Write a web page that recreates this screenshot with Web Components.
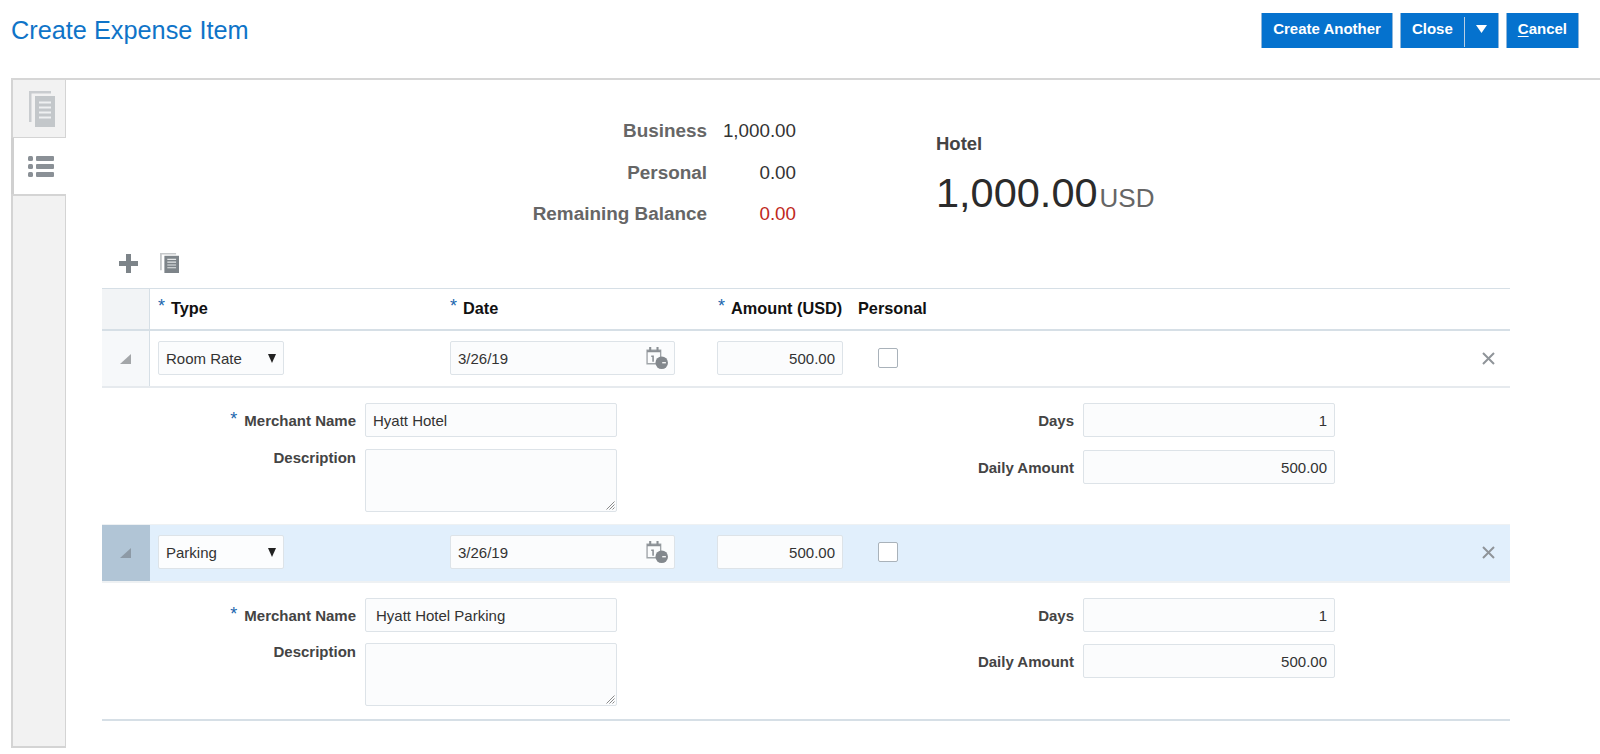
<!DOCTYPE html>
<html>
<head>
<meta charset="utf-8">
<title>Create Expense Item</title>
<style>
  html, body { margin: 0; height: 100%; background: #fff; overflow: hidden; }
  body { font-family: "Liberation Sans", Arial, sans-serif; color: #333; }
</style>
</head>
<body>
<expense-page></expense-page>

<script>
const ICONS = {
  pages: (back, front, line) => `<path fill="${back}" d="M0 0h22v2.500H2.500V31H0z"/><path fill="${front}" d="M6 5h20v31H6z"/><path fill="${line}" d="M10 10.500h12v2H10zM10 15.500h12v2H10zM10 20.500h12v2H10zM10 25.500h12v2H10z"/>`,
  list: '<g fill="#8a9096"><rect x="0" y="0" width="5" height="5" rx="1.500"/><rect x="0" y="8" width="5" height="5" rx="1.500"/><rect x="0" y="16" width="5" height="5" rx="1.500"/><rect x="8" y="0" width="18" height="5" rx="1"/><rect x="8" y="8" width="18" height="5" rx="1"/><rect x="8" y="16" width="18" height="5" rx="1"/></g>',
  plus: '<path fill="#7d8489" d="M7 0h5v7h7v5h-7v7H7v-7H0V7h7z"/>',
  calendar: '<path fill="none" stroke="#a0a5a9" stroke-width="1.300" d="M1 4h13v13H1z"/><path fill="#8b9095" d="M3 1h2v4H3zM10 1h2v4h-2zM1 4h13v2H1z"/><path fill="#8b9095" d="M5 9h2.500v6H6v-4.500H5z"/><circle cx="15" cy="16" r="6" fill="#83888d"/><path stroke="#fff" stroke-width="1.200" fill="none" d="M15.500 16h3.500"/>',
  close: '<path stroke="#8f9499" stroke-width="2" fill="none" d="M1 1l11 11M12 1L1 12"/>'
};

class ExpenseHeader extends HTMLElement {
  constructor() {
    super();
    this.attachShadow({ mode: "open" });
    this.shadowRoot.innerHTML = `
      <style>
        :host { display: flex; justify-content: space-between; align-items: flex-start; height: 78px; box-sizing: border-box; padding: 13px 21px 0 11px; }
        h1 { margin: 1px 0 0; font: 400 25.300px/33px "Liberation Sans", Arial, sans-serif; color: #0f74c8; }
        .actions { display: flex; gap: 7px; }
        .btn { display: flex; align-items: center; height: 35px; box-sizing: border-box; padding: 0 11px 4px; background: #0572ce; color: #fff; font: 700 15px "Liberation Sans", Arial, sans-serif; border-left: 1px solid #8fb6da; border-right: 1px solid #8fb6da; white-space: nowrap; }
        .split { padding-right: 0; }
        .split .sep { width: 1px; height: 30px; margin: 4px 0 0 11px; background: #b9cfe3; align-self: flex-start; }
        .split svg { margin: 0 11px 0 11px; }
        u { text-underline-offset: 2px; }
      </style>
      <h1>Create Expense Item</h1>
      <div class="actions">
        <div class="btn">Create Another</div>
        <div class="btn split">Close<span class="sep"></span><svg width="11" height="8" viewBox="0 0 11 8"><path fill="#fff" d="M0 0h11L5.500 8z"/></svg></div>
        <div class="btn"><span><u>C</u>ancel</span></div>
      </div>`;
  }
}

class SideTabs extends HTMLElement {
  constructor() {
    super();
    this.attachShadow({ mode: "open" });
    this.shadowRoot.innerHTML = `
      <style>
        :host { display: flex; flex-direction: column; flex: none; width: 55px; }
        .tab { box-sizing: border-box; display: flex; justify-content: center; align-items: center; }
        .off { height: 58px; background: #f2f2f2; border: 1px solid #d4d4d4; border-top: 0; border-left-width: 2px; padding-left: 5px; }
        .on { height: 56px; background: #fff; border-left: 3px solid #d0d0d0; padding-left: 1px; }
        .rest { flex: 1; background: #f2f2f2; border: 1px solid #d4d4d4; border-left-width: 2px; border-bottom-width: 2px; border-top-width: 2px; }
      </style>
      <div class="tab off"><svg width="26" height="36" viewBox="0 0 26 36">${ICONS.pages("#c9cccf", "#c3c7ca", "#eef0f1")}</svg></div>
      <div class="tab on"><svg width="26" height="21" viewBox="0 0 26 21">${ICONS.list}</svg></div>
      <div class="tab rest"></div>`;
  }
}

class ExpenseSummary extends HTMLElement {
  constructor() {
    super();
    this.attachShadow({ mode: "open" });
    this.shadowRoot.innerHTML = `
      <style>
        :host { display: flex; height: 164px; box-sizing: border-box; padding-top: 29px; font-family: "Liberation Sans", Arial, sans-serif; }
        .totals { display: grid; grid-template-columns: 605px 89px; grid-template-rows: 43px 41px 41px; align-items: center; text-align: right; font-size: 18.800px; height: 125px; }
        .l { font-weight: 700; font-size: 18.900px; color: #666; }
        .v { color: #333; }
        .red { color: #c0281c; }
        .hotel { margin-left: 140px; padding-top: 24px; }
        .name { font-weight: 700; font-size: 18.500px; color: #444; line-height: 22px; }
        .big { margin-top: 14px; font-size: 41.500px; line-height: 48px; color: #2b2b2b; white-space: nowrap; }
        .big span { font-size: 26px; color: #666; margin-left: 2px; }
      </style>
      <div class="totals">
        <div class="l">Business</div><div class="v">1,000.00</div>
        <div class="l">Personal</div><div class="v">0.00</div>
        <div class="l">Remaining Balance</div><div class="v red">0.00</div>
      </div>
      <div class="hotel">
        <div class="name">Hotel</div>
        <div class="big">1,000.00<span>USD</span></div>
      </div>`;
  }
}

class ExpenseToolbar extends HTMLElement {
  constructor() {
    super();
    this.attachShadow({ mode: "open" });
    this.shadowRoot.innerHTML = `
      <style>
        :host { display: flex; align-items: center; height: 44px; box-sizing: border-box; padding: 0 0 6px 17px; gap: 22px; }
        svg { display: block; }
      </style>
      <svg width="19" height="19" viewBox="0 0 19 19">${ICONS.plus}</svg>
      <svg width="19" height="20" viewBox="0 0 26 36" preserveAspectRatio="none">${ICONS.pages("#c5c8ca", "#7d8489", "#e4e6e8")}</svg>`;
  }
}

// shared look of the text boxes
const FIELD_CSS = `
  .field { box-sizing: border-box; height: 34px; display: flex; align-items: center; justify-content: space-between; background: #fbfcfd; border: 1px solid #dde3e8; border-radius: 2px; padding: 0 7px; font: 15px "Liberation Sans", Arial, sans-serif; color: #333; white-space: nowrap; }
  .num { justify-content: flex-end; }
`;

class ExpenseTableHead extends HTMLElement {
  constructor() {
    super();
    this.attachShadow({ mode: "open" });
    this.shadowRoot.innerHTML = `
      <style>
        :host { display: grid; grid-template-columns: 48px 292px 267px 141px 83px 1fr; height: 43px; box-sizing: border-box; border-top: 1px solid #d6dfe6; border-bottom: 2px solid #d6dfe6; font: 700 16.300px "Liberation Sans", Arial, sans-serif; color: #111; white-space: nowrap; }
        div { display: flex; align-items: center; padding-left: 8px; padding-bottom: 1px; }
        .corner { background: #f2f4f6; border-right: 1px solid #d6dfe6; padding: 0; box-sizing: border-box; }
        .star { color: #2166ae; font-weight: 400; margin-right: 6px; position: relative; top: -2px; font-size: 18px; }
      </style>
      <div class="corner"></div>
      <div><span class="star">*</span>Type</div>
      <div><span class="star">*</span>Date</div>
      <div style="padding-left:9px"><span class="star">*</span>Amount (USD)</div>
      <div>Personal</div>
      <div></div>`;
  }
}

class ExpenseRow extends HTMLElement {
  constructor() {
    super();
    this.attachShadow({ mode: "open" });
    const a = (n) => this.getAttribute(n);
    const sel = this.hasAttribute("selected");
    this.shadowRoot.innerHTML = `
      <style>
        :host { display: grid; grid-template-columns: 48px 292px 267px 141px 83px 1fr; height: ${sel ? 59 : 57}px; box-sizing: border-box; align-items: center; padding-bottom: ${sel ? 2 : 1}px; border-bottom: 2px solid ${sel ? "#eef1f3" : "#e6eaee"}; ${sel ? "border-top: 1px solid #eef1f3;" : ""} background: ${sel ? "#e1effc" : "#fff"}; }
        ${FIELD_CSS}
        .toggle { align-self: stretch; margin-bottom: -${sel ? 2 : 1}px; display: flex; align-items: center; justify-content: center; box-sizing: border-box; background: ${sel ? "#b1c5d6" : "#f6f8fa"}; border-right: 1px solid ${sel ? "#b1c5d6" : "#d6dfe6"}; }
        .select { width: 126px; margin-left: 8px; background: ${sel ? "#fcfdfe" : "#fbfcfd"}; }
        .date { width: 225px; margin-left: 8px; padding-right: 0; }
        .date svg { margin: 0 6px 2px 0; }
        .amt { width: 126px; margin-left: 8px; }
        .check { width: 20px; height: 20px; box-sizing: border-box; margin-left: 28px; background: #fff; border: 1px solid #a9b2ba; border-radius: 2px; }
        .x { justify-self: end; margin-right: 15px; }
        svg { display: block; flex: none; }
      </style>
      <div class="toggle"><svg width="11" height="10" viewBox="0 0 11 10"><path fill="${sel ? "#8d9aa6" : "#a3a6a9"}" d="M11 0v10H0z"/></svg></div>
      <div class="field select"><span>${a("type")}</span><svg width="8" height="9" viewBox="0 0 8 9"><path fill="#222" d="M0 0h8L4 9z"/></svg></div>
      <div class="field date"><span>${a("date")}</span><svg width="22" height="23" viewBox="0 0 21 22">${ICONS.calendar}</svg></div>
      <div class="field amt num">${a("amount")}</div>
      <div class="check"></div>
      <svg class="x" width="13" height="13" viewBox="0 0 13 13">${ICONS.close}</svg>`;
  }
}

class ExpenseDetail extends HTMLElement {
  constructor() {
    super();
    this.attachShadow({ mode: "open" });
    const a = (n) => this.getAttribute(n);
    const last = this.hasAttribute("last");
    this.shadowRoot.innerHTML = `
      <style>
        :host { display: grid; grid-template-columns: 263px 252px 466px 252px; grid-template-rows: 34px 63px; row-gap: ${last ? 11 : 12}px; height: 136px; box-sizing: border-box; padding-top: 15px; }
        ${FIELD_CSS}
        .label { font: 700 15px "Liberation Sans", Arial, sans-serif; color: #444; text-align: right; padding-right: 9px; align-self: center; white-space: nowrap; }
        .top { grid-row: 2; align-self: start; line-height: 17px; }
        .star { color: #2166ae; font-weight: 400; font-size: 18px; position: relative; top: -1px; margin-right: 7px; }
        .name { padding-left: ${a("indent") || 7}px; }
        .area { grid-row: 2; position: relative; height: 63px; align-items: flex-start; }
        .area svg { position: absolute; right: 1px; bottom: 1px; }
        .stack { grid-column: 3 / 5; grid-row: 1 / 3; display: grid; grid-template-columns: 466px 252px; grid-template-rows: 34px 34px; row-gap: ${last ? 12 : 13}px; align-self: start; }
      </style>
      <div class="label"><span class="star">*</span>Merchant Name</div>
      <div class="field name">${a("merchant")}</div>
      <div class="label top">Description</div>
      <div class="field area"><svg width="9" height="9" viewBox="0 0 9 9"><path stroke="#8a8a8a" fill="none" d="M8.500 .5l-8 8M8.500 3.500l-5 5M8.500 6.500l-2 2"/></svg></div>
      <div class="stack">
        <div class="label">Days</div>
        <div class="field num">1</div>
        <div class="label">Daily Amount</div>
        <div class="field num">${a("daily")}</div>
      </div>`;
  }
}

class ExpensePage extends HTMLElement {
  constructor() {
    super();
    this.attachShadow({ mode: "open" });
    this.shadowRoot.innerHTML = `
      <style>
        :host { display: block; height: 754px; overflow: hidden; }
        .main { display: flex; height: 670px; border-top: 2px solid #d6d6d6; margin-left: 11px; box-sizing: border-box; }
        .content { width: 1408px; margin-left: 36px; }
        .end { height: 2px; background: #d6dfe6; }
      </style>
      <expense-header></expense-header>
      <div class="main">
        <side-tabs></side-tabs>
        <div class="content">
          <expense-summary></expense-summary>
          <expense-toolbar></expense-toolbar>
          <expense-table-head></expense-table-head>
          <expense-row type="Room Rate" date="3/26/19" amount="500.00"></expense-row>
          <expense-detail merchant="Hyatt Hotel" daily="500.00"></expense-detail>
          <expense-row selected type="Parking" date="3/26/19" amount="500.00"></expense-row>
          <expense-detail last merchant="Hyatt Hotel Parking" indent="10" daily="500.00"></expense-detail>
          <div class="end"></div>
        </div>
      </div>`;
  }
}

customElements.define("expense-header", ExpenseHeader);
customElements.define("side-tabs", SideTabs);
customElements.define("expense-summary", ExpenseSummary);
customElements.define("expense-toolbar", ExpenseToolbar);
customElements.define("expense-table-head", ExpenseTableHead);
customElements.define("expense-row", ExpenseRow);
customElements.define("expense-detail", ExpenseDetail);
customElements.define("expense-page", ExpensePage);
</script>
</body>
</html>
